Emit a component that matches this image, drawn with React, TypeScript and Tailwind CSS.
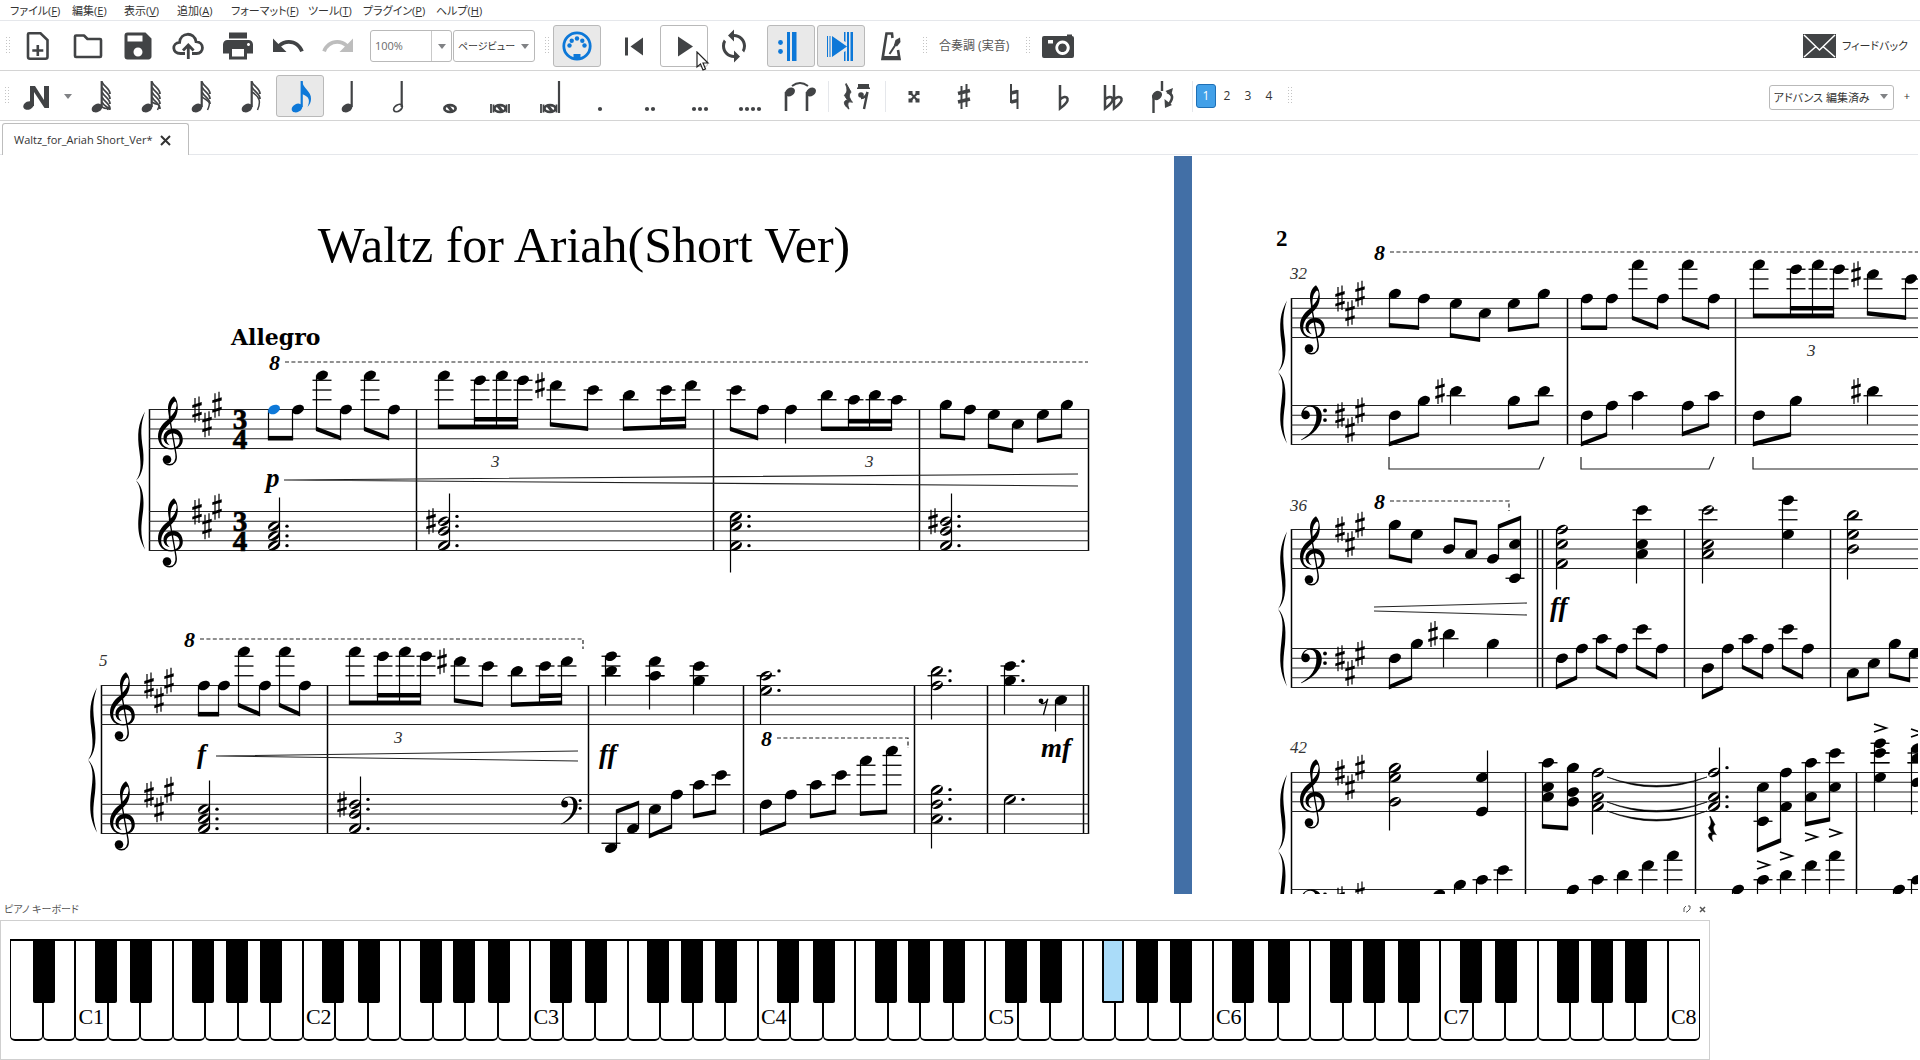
import type { ReactNode } from "react";
import { MdLoop, MdPrint, MdRedo, MdSave, MdUndo } from "react-icons/md";

/* ---------- score engraving ---------- */

const HALF_SPACE = 4.875;
const STAFF_HEIGHT = HALF_SPACE * 8;
const STEM_OFFSET = 5.5;

type Chord = {
  x: number;
  // staff steps counted downwards from the top line
  steps: number[];
  // stem end, relative to the top line
  stem?: number;
  up?: boolean;
  half?: boolean;
  dots?: number[];
  color?: string;
};

type Beam = {
  notes: [number, number | number[]][];
  ends: [number, number];
  up?: boolean;
  // index of the first note under the second beam
  second?: number;
  color?: string;
};

type StaffData = {
  top: number;
  clef: "treble" | "bass";
  time?: boolean;
  beams?: Beam[];
  chords?: Chord[];
  sharps?: [number, number][];
};

type SystemData = {
  left: number;
  right: number;
  keyX: number;
  bars: number[];
  upper: StaffData;
  lower: StaffData;
};

const b = (
  notes: Beam["notes"],
  start: number,
  end: number,
  extra: Partial<Beam> = {},
): Beam => ({ notes, ends: [start, end], ...extra });

const c = (x: number, steps: number[], stem: number, extra: Partial<Chord> = {}): Chord => ({
  x,
  steps,
  stem,
  ...extra,
});

const PAGE_ONE: SystemData[] = [
  {
    left: 149,
    right: 1089,
    keyX: 197,
    bars: [416, 713, 919, 1088],
    upper: {
      top: 409.5,
      clef: "treble",
      time: true,
      beams: [
        b([[274, 0], [298, 0]], 31, 31, { color: "#0d78d8" }),
        b([[322, -7], [346, 0]], 21.5, 31),
        b([[370, -7], [394, 0]], 21.5, 31),
        b([[444, -7], [480, -6], [502, -7], [523, -6]], 19.5, 19.5, { second: 1 }),
        b([[556, -5], [593, -4]], 17, 21.5),
        b([[629, -3], [666, -4], [691, -5]], 21.5, 19, { second: 1 }),
        b([[736, -4], [763, 0]], 21.5, 31),
        b([[827, -3], [854, -2], [875, -3], [897, -2]], 21.5, 21.5, { second: 1 }),
        b([[946, -1], [970, 0]], 28.5, 31),
        b([[994, 1], [1018, 3]], 38.5, 43.5),
        b([[1043, 1], [1067, -1]], 33.5, 28.5),
      ],
      chords: [c(791, [0], 34)],
      sharps: [[540, -5]],
    },
    lower: {
      top: 511.5,
      clef: "treble",
      time: true,
      chords: [
        c(274, [3, 5, 7], -14, { up: true, half: true, dots: [3, 5, 7] }),
        c(444, [2, 4, 7], -18, { up: true, half: true, dots: [1, 3, 7] }),
        c(736, [1, 3, 7], 61, { half: true, dots: [1, 3, 7] }),
        c(946, [2, 4, 7], -18, { up: true, half: true, dots: [1, 3, 7] }),
      ],
      sharps: [[431, 2], [933, 2]],
    },
  },
  {
    left: 101,
    right: 1089,
    keyX: 149,
    bars: [327, 588, 743, 914, 987, 1083, 1088],
    upper: {
      top: 685.5,
      clef: "treble",
      beams: [
        b([[204, 0], [224, 0]], 31, 31),
        b([[244, -7], [265, 0]], 21.5, 31),
        b([[285, -7], [305, 0]], 21.5, 31),
        b([[355, -7], [383, -6], [405, -7], [426, -6]], 19.5, 19.5, { second: 1 }),
        b([[460, -5], [488, -4]], 17, 21.5),
        b([[517, -3], [545, -4], [567, -5]], 21.5, 19.5, { second: 1 }),
      ],
      chords: [
        c(611, [-6, -3], 20),
        c(655, [-5, -2], 24),
        c(699, [-4, -1], 29),
        c(766, [-2, 1], 39, { half: true, dots: [-3, 1] }),
        c(937, [-3, 0], 34, { half: true, dots: [-3, -1] }),
        c(1010, [-4, -1], 29, { dots: [-5, -1] }),
        c(1061, [3], 46),
      ],
      sharps: [[442, -5]],
    },
    lower: {
      top: 794.5,
      clef: "treble",
      beams: [
        b([[611, 11], [633, 7]], 15, 6, { up: true }),
        b([[655, 3], [677, 0]], 44, 34),
        b([[699, -2], [721, -4]], 24, 19.5),
        b([[766, 2], [791, 0]], 41.5, 31),
        b([[816, -2], [841, -4]], 24, 19.5),
        b([[866, -7], [892, -9]], 21.5, 19.5),
      ],
      chords: [
        c(204, [3, 5, 7], -14, { up: true, half: true, dots: [3, 5, 7] }),
        c(355, [2, 4, 7], -18, { up: true, half: true, dots: [1, 3, 7] }),
        c(937, [-1, 2, 5], 54, { half: true, dots: [-1, 1, 5] }),
        c(1010, [1], 39, { half: true, dots: [1] }),
      ],
      sharps: [[342, 2]],
    },
  },
];

const PAGE_TWO: SystemData[] = [
  {
    left: 1291,
    right: 1920,
    keyX: 1340,
    bars: [1567, 1735],
    upper: {
      top: 298.5,
      clef: "treble",
      beams: [
        b([[1395, -1], [1424, 0]], 29, 31.5),
        b([[1456, 1], [1485, 3]], 39, 43.5),
        b([[1514, 1], [1544, -1]], 33.5, 29),
        b([[1587, 0], [1612, 0]], 31.5, 31.5),
        b([[1638, -7], [1663, 0]], 21.5, 31.5),
        b([[1688, -7], [1714, 0]], 21.5, 31.5),
        b([[1759, -7], [1796, -6], [1818, -7], [1839, -6]], 19.5, 19.5, { second: 1 }),
        b([[1873, -5], [1911, -4]], 17, 21.5),
      ],
      sharps: [[1856, -5]],
    },
    lower: {
      top: 405.5,
      clef: "bass",
      beams: [
        b([[1395, 2], [1424, -1]], 41, 31),
        b([[1514, -1], [1544, -3]], 24, 19),
        b([[1587, 2], [1612, 0]], 41, 31),
        b([[1688, 0], [1714, -2]], 31, 21.5),
        b([[1759, 2], [1796, -1]], 41, 31),
      ],
      chords: [c(1456, [-3], 19), c(1638, [-2], 24), c(1873, [-3], 19)],
      sharps: [[1440, -3], [1856, -3]],
    },
  },
  {
    left: 1291,
    right: 1920,
    keyX: 1340,
    bars: [1537, 1542, 1684, 1830],
    upper: {
      top: 529.5,
      clef: "treble",
      beams: [
        b([[1395, -1], [1417, 1]], 29, 34),
        b([[1449, 4], [1471, 5]], -12, -9, { up: true }),
        b([[1493, 6], [1515, [3, 10]]], -5, -14, { up: true }),
      ],
      chords: [
        c(1562, [0, 3, 7], 60, { half: true }),
        c(1642, [-4, 3, 5], 54),
        c(1708, [-4, 3, 5], 54, { half: true }),
        c(1788, [-6, 1], 39),
        c(1853, [-3, 1, 4], 50, { half: true }),
      ],
    },
    lower: {
      top: 648.5,
      clef: "bass",
      beams: [
        b([[1395, 2], [1417, -1]], 41, 31),
        b([[1562, 2], [1582, 0]], 41, 31),
        b([[1602, -2], [1622, 0]], 20.5, 31),
        b([[1642, -4], [1662, 0]], 20.5, 31),
        b([[1708, 4], [1728, 0]], 51, 41),
        b([[1748, -2], [1768, 0]], 20.5, 31),
        b([[1788, -4], [1808, 0]], 20.5, 31),
        b([[1853, 5], [1874, 3]], 53, 48),
        b([[1895, -1], [1915, 1]], 29, 34),
      ],
      chords: [c(1449, [-3], 19), c(1493, [-1], 29)],
      sharps: [[1433, -3]],
    },
  },
  {
    left: 1291,
    right: 1920,
    keyX: 1340,
    bars: [1525, 1695, 1856],
    upper: {
      top: 772.5,
      clef: "treble",
      beams: [
        b([[1548, [-2, 3, 5]], [1573, [-1, 4, 6]]], 56, 58),
        b([[1763, [3, 10]], [1786, [0, 7]]], 80, 70),
        b([[1811, [-2, 5]], [1835, [-4, 3]]], 54, 49),
      ],
      chords: [
        c(1395, [-1, 1, 6], 58, { half: true }),
        c(1482, [1, 8], -22, { up: true }),
        c(1598, [0, 5, 7], 62, { half: true }),
        c(1714, [0, 5, 7], -25, { up: true, half: true, dots: [-1, 5, 7] }),
        c(1880, [-6, -4, 1], 39),
        c(1917, [-5, -3, 2], 42),
      ],
    },
    lower: {
      top: 889.5,
      clef: "bass",
      chords: [
        c(1439, [1], 40),
        c(1460, [-1], 40),
        c(1482, [-2], 40),
        c(1503, [-4], 40),
        c(1573, [0], 40),
        c(1598, [-2], 40),
        c(1623, [-3], 40),
        c(1648, [-5], 40),
        c(1673, [-7], 40),
        c(1738, [0], 40),
        c(1763, [-2], 40),
        c(1786, [-3], 40),
        c(1811, [-5], 40),
        c(1835, [-7], 40),
        c(1899, [0], 40),
        c(1917, [-2], 40),
      ],
    },
  },
];

function Head({ x, step, half, color }: { x: number; step: number; half?: boolean; color?: string }) {
  const y = step * HALF_SPACE;
  const ledgers: number[] = [];
  for (let s = -2; s >= step; s -= 2) ledgers.push(s);
  for (let s = 10; s <= step; s += 2) ledgers.push(s);
  return (
    <g>
      {ledgers.map((s) => (
        <line key={s} x1={x - 9.5} x2={x + 9.5} y1={s * HALF_SPACE} y2={s * HALF_SPACE} stroke="#000" strokeWidth="1.3" />
      ))}
      {half ? (
        <g transform={`translate(${x} ${y}) rotate(-26)`}>
          <path
            fillRule="evenodd"
            d="M-6.3 0A6.3 4.3 0 1 1 6.3 0A6.3 4.3 0 1 1-6.3 0ZM-5.6 .7C-5 3 5.8 .6 5.6-1.2C5-3-5.8-.8-5.6 .7Z"
          />
        </g>
      ) : (
        <ellipse rx="6.3" ry="4.4" fill={color ?? "#000"} transform={`translate(${x} ${y}) rotate(-26)`} />
      )}
    </g>
  );
}

function Stem({ x, from, to }: { x: number; from: number; to: number }) {
  return <line x1={x} x2={x} y1={from} y2={to} stroke="#000" strokeWidth="1.2" />;
}

function ChordGlyph({ x, steps, stem, up, half, dots, color }: Chord) {
  const base = (up ? Math.max(...steps) : Math.min(...steps)) * HALF_SPACE;
  return (
    <g>
      {stem !== undefined && <Stem x={up ? x + STEM_OFFSET : x - STEM_OFFSET} from={base} to={stem} />}
      {steps.map((step) => (
        <Head key={step} x={x} step={step} half={half} color={color} />
      ))}
      {dots?.map((step) => (
        <circle key={step} cx={x + 13} cy={step * HALF_SPACE} r="1.7" />
      ))}
    </g>
  );
}

function BeamGroup({ notes, ends, up, second, color }: Beam) {
  const offset = up ? STEM_OFFSET : -STEM_OFFSET;
  const x1 = notes[0][0] + offset;
  const x2 = notes[notes.length - 1][0] + offset;
  const tip = (x: number) => ends[0] + ((ends[1] - ends[0]) * (x - x1)) / (x2 - x1);
  const bar = (from: number, shift: number) => {
    const t = up ? 4.6 : -4.6;
    return `M${from - 0.6} ${tip(from) + shift}L${x2 + 0.6} ${tip(x2) + shift}V${tip(x2) + shift + t}L${from - 0.6} ${tip(from) + shift + t}Z`;
  };
  return (
    <g>
      {notes.map(([x, step], i) => (
        <ChordGlyph
          key={x}
          x={x}
          steps={Array.isArray(step) ? step : [step]}
          stem={tip(x + offset) + (up ? 1 : -1)}
          up={up}
          color={i === 0 ? color : undefined}
        />
      ))}
      <path d={bar(x1, 0)} />
      {second !== undefined && <path d={bar(notes[second][0] + offset, -7.5)} />}
    </g>
  );
}

function Sharp({ x, step }: { x: number; step: number }) {
  return (
    <g transform={`translate(${x} ${step * HALF_SPACE})`}>
      <path d="M-2-11.5V13M2-13V11.5" stroke="#000" strokeWidth="1.2" />
      <path d="M-4.7-3.4L4.7-6.4V-3.2L-4.7-.6ZM-4.7 6.2L4.7 3.2V6.2L-4.7 9Z" transform="translate(0 -1)" />
    </g>
  );
}

function TrebleClef({ x }: { x: number }) {
  return (
    <g transform={`translate(${x} ${HALF_SPACE * 6})`}>
      <path
        fillRule="evenodd"
        d="M16-42.5C12-40 9.9-35 10-30C10.1-26 10.8-23 11.4-20.5C5-15.5 0-10.5 0-2C0 6 6 10.8 13.2 10.8C20 10.8 24.8 7 24.8 1C24.8-5.8 20.5-10 15.5-10C9.5-10 5.5-6 5.5-1C5.5 2.8 8 5.8 11.8 6.4C9.4 4.6 8.6 2.6 8.6 .8C8.6-2.8 11-5.2 14.8-5.2C18.8-5.2 21.6-2.6 21.6 1.8C21.6 6 18.5 9.4 13 9.4C7.5 9.4 3.2 6 3.2 .2C3.2-6 6.8-10.4 13-16C17.2-20 19.8-24.5 19.8-31C19.8-36 18.5-40 16-42.5ZM17-37.2C18.2-37 18.7-35.2 18.5-33C18-29 16-25.5 12.7-22.3C11.9-28.5 13.4-35 17-37.2Z"
      />
      <path d="M11.4-22L18 15.5C19.2 22.5 15.5 26 11.6 26C9 26 7 25 6 23" fill="none" stroke="#000" strokeWidth="1.4" />
      <circle cx="9" cy="20.8" r="4.3" />
    </g>
  );
}

function BassClef({ x, small }: { x: number; small?: boolean }) {
  return (
    <g transform={small ? `translate(${x} 2) scale(.8)` : `translate(${x} 0)`}>
      <path d="M0 34.2C9.5 29 15.4 21 15.4 11C15.4 4.6 13.2 1.3 9.2 1.3C5.8 1.3 3.2 3.3 2.6 6.4L.4 9.2C.4 3.8 4.6 0 10.3 0C16.6 0 20.8 4 20.8 10.6C20.8 20.5 12.8 29.5 .3 34.8Z" />
      <circle cx="4.6" cy="9.4" r="4.3" />
      <circle cx="24" cy="5" r="1.9" />
      <circle cx="24" cy="14.6" r="1.9" />
    </g>
  );
}

function Brace({ x, top, bottom }: { x: number; top: number; bottom: number }) {
  const h = (bottom - top) / 2;
  const half = `M9 ${-h}C2 ${-h * 0.82} 1 ${-h * 0.68} 3.4 ${-h * 0.42}C5.4 ${-h * 0.2} 5 ${-h * 0.1} 0 0C6.5 ${-h * 0.08} 8.6 ${-h * 0.24} 7 ${-h * 0.45}C4.6 ${-h * 0.7} 4.4 ${-h * 0.8} 9 ${-h}Z`;
  return (
    <g transform={`translate(${x} ${top + h})`}>
      <path d={half} />
      <path d={half} transform="scale(1 -1)" />
    </g>
  );
}

function TimeSignature({ x }: { x: number }) {
  return (
    <text className="text-[29px] font-bold" textAnchor="middle" stroke="#000" strokeWidth=".7">
      <tspan x={x} y={19}>3</tspan>
      <tspan x={x} y={39}>4</tspan>
    </text>
  );
}

function Staff({ staff, system }: { staff: StaffData; system: SystemData }) {
  const { left, right, keyX } = system;
  const shift = staff.clef === "bass" ? 2 : 0;
  return (
    <g transform={`translate(0 ${staff.top})`}>
      {[0, 2, 4, 6, 8].map((s) => (
        <line key={s} x1={left} x2={right} y1={s * HALF_SPACE} y2={s * HALF_SPACE} stroke="#222" strokeWidth="1.1" />
      ))}
      {staff.clef === "treble" ? <TrebleClef x={left + 9} /> : <BassClef x={left + 10} />}
      <Sharp x={keyX} step={shift} />
      <Sharp x={keyX + 10} step={3 + shift} />
      <Sharp x={keyX + 20} step={-1 + shift} />
      {staff.time && <TimeSignature x={240} />}
      {staff.sharps?.map(([x, step]) => <Sharp key={x} x={x} step={step} />)}
      {staff.chords?.map((chord) => <ChordGlyph key={chord.x} {...chord} />)}
      {staff.beams?.map((beam) => <BeamGroup key={beam.notes[0][0]} {...beam} />)}
    </g>
  );
}

function System({ system }: { system: SystemData }) {
  const top = system.upper.top;
  const bottom = system.lower.top + STAFF_HEIGHT;
  return (
    <g>
      <Brace x={system.left - 13} top={top + 2} bottom={bottom - 1} />
      {[system.left, ...system.bars].map((x) => (
        <line key={x} x1={x + 0.5} x2={x + 0.5} y1={top - 0.5} y2={bottom + 0.5} stroke="#000" strokeWidth="1.5" />
      ))}
      <Staff staff={system.upper} system={system} />
      <Staff staff={system.lower} system={system} />
    </g>
  );
}

function Ottava({ x, y, to, hook }: { x: number; y: number; to: number; hook?: boolean }) {
  return (
    <g>
      <text x={x} y={y + 8} className="text-[22px] font-bold italic">8</text>
      <path
        d={`M${x + 16} ${y}H${to}${hook ? "v10" : ""}`}
        fill="none"
        stroke="#222"
        strokeWidth="1.2"
        strokeDasharray="4 2.4"
      />
    </g>
  );
}

function Hairpin({ x1, x2, y, from, to }: { x1: number; x2: number; y: number; from: number; to: number }) {
  return (
    <path d={`M${x1} ${y - from}L${x2} ${y - to}M${x1} ${y + from}L${x2} ${y + to}`} stroke="#222" strokeWidth="1.1" />
  );
}

function Dynamic({ x, y, children }: { x: number; y: number; children: ReactNode }) {
  return (
    <text x={x} y={y} className="text-[27px] font-bold italic">
      {children}
    </text>
  );
}

function Small({ x, y, children }: { x: number; y: number; children: ReactNode }) {
  return (
    <text x={x} y={y} className="text-[17px] italic" fill="#333">
      {children}
    </text>
  );
}

const QUARTER_REST = "M2.2 0L7 8.6C4.6 11.4 4.6 13.6 8.4 18.8C4.4 17.4 2.4 19.4 5 25.6C-.8 21.6-1 16.6 3.6 16.8L.4 11.8C3.6 8.6 3.6 5.6 1.6 .8Z";

function PageOne() {
  return (
    <svg
      className="shrink-0 bg-white font-['Liberation_Serif',serif]"
      width="1174"
      height="738"
      viewBox="0 156 1174 738"
      role="img"
      aria-label="Waltz for Ariah(Short Ver), page 1"
    >
      <text x="584" y="262" textAnchor="middle" className="text-[50px]">Waltz for Ariah(Short Ver)</text>
      <text x="231" y="345" className="font-['DejaVu_Serif',serif] text-[22px] font-bold">Allegro</text>
      {PAGE_ONE.map((system) => <System key={system.upper.top} system={system} />)}

      <Ottava x={269} y={362} to={1088} />
      <Small x={491} y={467}>3</Small>
      <Small x={865} y={467}>3</Small>
      <Dynamic x={266} y={487}>p</Dynamic>
      <Hairpin x1={284} x2={1078} y={480} from={0} to={6} />

      <Small x={99} y={666}>5</Small>
      <Ottava x={184} y={639} to={583} hook />
      <Small x={394} y={743}>3</Small>
      <Dynamic x={197} y={763}>f</Dynamic>
      <Hairpin x1={216} x2={578} y={756} from={0} to={5} />
      <Dynamic x={599} y={763}>ff</Dynamic>
      <Ottava x={761} y={738} to={908} hook />
      <Dynamic x={1041} y={757}>mf</Dynamic>
      <g transform="translate(0 794.5)">
        <BassClef x={561} small />
      </g>
      <g transform="translate(1038 698)">
        <circle cx="3" cy="3" r="2.4" />
        <path d="M3 5.4C6 6 8.6 4 9.8 .8L5.4 17" fill="none" stroke="#000" strokeWidth="1.3" />
      </g>
    </svg>
  );
}

function PageTwo() {
  return (
    <svg
      className="block bg-white font-['Liberation_Serif',serif]"
      width="728"
      height="738"
      viewBox="1192 156 728 738"
      role="img"
      aria-label="Waltz for Ariah(Short Ver), page 2"
    >
      <text x="1276" y="246" className="text-[23px] font-bold">2</text>
      {PAGE_TWO.map((system) => <System key={system.upper.top} system={system} />)}

      <Small x={1290} y={279}>32</Small>
      <Ottava x={1374} y={252} to={1920} />
      <Small x={1807} y={356}>3</Small>
      <path
        d="M1389 457V469H1539L1544 457M1581 457V469H1709L1714 457M1753 457V469H1920"
        fill="none"
        stroke="#222"
        strokeWidth="1.2"
      />

      <Small x={1290} y={511}>36</Small>
      <Ottava x={1374} y={501} to={1509} hook />
      <Hairpin x1={1374} x2={1527} y={609} from={2} to={6} />
      <Dynamic x={1550} y={616}>ff</Dynamic>

      <Small x={1290} y={753}>42</Small>
      {[777, 802, 811].map((y) => (
        <path key={y} d={`M1607 ${y}Q1656 ${y + 20} 1707 ${y}Q1656 ${y + 17} 1607 ${y}Z`} stroke="#000" strokeWidth=".6" />
      ))}
      <path d={QUARTER_REST} transform="translate(1708 816)" stroke="#000" strokeWidth=".5" />
      {[
        [1763, 865],
        [1786, 856],
        [1811, 837],
        [1835, 833],
        [1880, 728],
        [1917, 733],
      ].map(([x, y]) => (
        <path key={x} d={`M${x - 6} ${y - 4}L${x + 6} ${y}L${x - 6} ${y + 4}`} fill="none" stroke="#000" strokeWidth="1.8" />
      ))}
    </svg>
  );
}

/* ---------- toolbar icons ---------- */

function Icon({ children }: { children: ReactNode }) {
  return (
    <svg className="size-9" viewBox="0 0 36 36" fill="none" stroke="none" aria-hidden="true">
      {children}
    </svg>
  );
}

const NewIcon = () => (
  <Icon>
    <path d="M9 5.2H20.5L27.5 12V28.8Q27.5 30.8 25.5 30.8H10Q8 30.8 8 28.8V6.2Q8 5.2 9 5.2Z" stroke="currentColor" strokeWidth="2.6" />
    <path d="M17.8 17V28M12.3 22.5H23.3" stroke="currentColor" strokeWidth="2.6" />
  </Icon>
);

const OpenIcon = () => (
  <Icon>
    <path d="M5 8.5Q5 7.5 6 7.5H14L17.5 11H30Q31 11 31 12V28Q31 29 30 29H6Q5 29 5 28Z" stroke="currentColor" strokeWidth="2.6" strokeLinejoin="round" />
  </Icon>
);

const CloudIcon = () => (
  <Icon>
    <path
      d="M15 25.5H10.5C1.8 25.5 1.6 15 9.6 14.4C10.4 4 24.2 3.4 26 13.6C34.6 14 34.4 25.5 26.5 25.5H22"
      stroke="currentColor"
      strokeWidth="2.8"
    />
    <path d="M18.3 31V18M13 22.5L18.3 17L23.6 22.5" stroke="currentColor" strokeWidth="2.8" />
  </Icon>
);

const MidiIcon = () => (
  <Icon>
    <circle cx="18" cy="18" r="13.2" stroke="currentColor" strokeWidth="2.8" />
    <path d="M14.5 26H21.5V32H14.5Z" fill="currentColor" />
    {[
      [10.5, 17.5],
      [12.7, 12.8],
      [18, 10.5],
      [23.3, 12.8],
      [25.5, 17.5],
    ].map(([x, y]) => (
      <circle key={x} cx={x} cy={y} r="2.2" fill="currentColor" />
    ))}
  </Icon>
);

const RewindIcon = () => (
  <Icon>
    <path d="M9 9.5H12V27.5H9ZM27 9.5V27.5L14.5 18.5Z" fill="currentColor" />
  </Icon>
);

const PlayIcon = () => (
  <Icon>
    <path d="M12 8.5V28.5L27 18.5Z" fill="currentColor" />
  </Icon>
);

const RepeatIcon = () => (
  <Icon>
    <circle cx="7.5" cy="14.5" r="2.4" fill="currentColor" />
    <circle cx="7.5" cy="23.5" r="2.4" fill="currentColor" />
    <path d="M14 4H17V33H14ZM19 4H23.5V33H19Z" fill="currentColor" />
  </Icon>
);

const PanIcon = () => (
  <Icon>
    <path d="M4 8H5V29H4ZM6.5 8H7.5V29H6.5ZM9 8L24 18.5L9 29ZM21 4H22.500V14L21 13ZM24 4H26V33H24ZM27.5 4H30V33H27.5ZM21 24L22.5 23V33H21Z" fill="currentColor" />
  </Icon>
);

const MetronomeIcon = () => (
  <Icon>
    <path d="M19.5 10L19 5.5H13.5L9.5 31H26.5L25 22" stroke="currentColor" strokeWidth="2.6" />
    <path d="M11 28H25V32H9Z" fill="currentColor" />
    <path d="M16.5 26L26 11.5" stroke="currentColor" strokeWidth="2" />
    <path d="M21 17L22.5 12L27 9.5L27.5 14L24 18.5Z" fill="currentColor" />
  </Icon>
);

const CameraIcon = () => (
  <Icon>
    <path
      fillRule="evenodd"
      fill="currentColor"
      d="M4 8H27V6.5H32V8Q34 8 34 10V28Q34 30 32 30H4Q2 30 2 28V10Q2 8 4 8ZM8 12V15.5H13V12ZM22.5 12.5A7.2 7.2 0 1 0 22.6 12.5ZM22.5 15.5A4.3 4.3 0 1 1 22.4 15.5Z"
    />
  </Icon>
);

const NIcon = () => (
  <Icon>
    <ellipse cx="10.5" cy="27.5" rx="5.5" ry="4" transform="rotate(-25 10.5 27.5)" fill="currentColor" />
    <path d="M12 28V8H17L26 22V8H31V30H26.5L16 14V28Z" fill="currentColor" />
  </Icon>
);

function NoteIcon({ flags = 0, hollow }: { flags?: number; hollow?: boolean }) {
  return (
    <Icon>
      {hollow ? (
        <ellipse cx="16" cy="30" rx="4.8" ry="3" transform="rotate(-35 16 30)" stroke="currentColor" strokeWidth="1.8" />
      ) : (
        <ellipse cx="15" cy="30" rx="5.6" ry="4" transform="rotate(-28 15 30)" fill="currentColor" />
      )}
      <path d="M19.7 3V29" stroke="currentColor" strokeWidth="2.2" />
      {flags === 1 && (
        <path d="M20 3C21 11 29.500 13 29 21C29 24 27.5 27 25.5 29C30 19 23 17.5 20 16Z" fill="currentColor" />
      )}
      {flags > 1 &&
        Array.from({ length: flags }, (_, i) => (
          <path key={i} d={`M20 ${4 + i * 5}C22 ${9 + i * 5} 28 ${10 + i * 5} 28 ${Math.min(16 + i * 5, 32)}`} stroke="currentColor" strokeWidth="1.8" />
        ))}
      {flags > 1 && <path d={`M20 ${4 + flags * 5}C28 ${9 + flags * 5} 29 24 25.5 32`} stroke="currentColor" strokeWidth="1.5" />}
    </Icon>
  );
}

function WholeIcon({ breve, longa }: { breve?: boolean; longa?: boolean }) {
  return (
    <Icon>
      <ellipse cx="18" cy="30.5" rx="5.6" ry="3.4" stroke="currentColor" strokeWidth="2.8" />
      <path d="M15.5 27.5L20.5 33.5" stroke="currentColor" strokeWidth="3" />
      {(breve || longa) && <path d="M9 26V35M11.5 26.5V34.500M27 26V35M24.5 26.5V34.5" stroke="currentColor" strokeWidth="1.8" />}
      {longa && <path d="M27 3V35" stroke="currentColor" strokeWidth="2.2" />}
    </Icon>
  );
}

const DotsIcon = ({ count }: { count: number }) => (
  <Icon>
    {Array.from({ length: count }, (_, i) => (
      <circle key={i} cx={18 + (i - (count - 1) / 2) * 6} cy="31" r="2.1" fill="currentColor" />
    ))}
  </Icon>
);

const TieIcon = () => (
  <Icon>
    <ellipse cx="8" cy="14" rx="5.4" ry="4" transform="rotate(-35 8 14)" fill="currentColor" />
    <ellipse cx="29" cy="14" rx="5.4" ry="4" transform="rotate(-35 29 14)" fill="currentColor" />
    <path d="M4 14V33M25 14V33" stroke="currentColor" strokeWidth="2.6" />
    <path d="M10 8Q18 2 26 8" stroke="currentColor" strokeWidth="2" />
  </Icon>
);

const RestIcon = () => (
  <Icon>
    <path d={QUARTER_REST} transform="translate(5 5.5)" fill="currentColor" stroke="currentColor" />
    <path d="M19 6H30V10H19ZM18 9.5H31V11H18Z" fill="currentColor" />
    <circle cx="22" cy="17" r="2.8" fill="currentColor" />
    <path d="M22 20Q27 20 28.5 14L25 31" stroke="currentColor" strokeWidth="2.4" />
  </Icon>
);

const DoubleSharpIcon = () => (
  <Icon>
    <path d="M14 14.5L22 23M22 14.5L14 23" stroke="currentColor" strokeWidth="2" />
    <path d="M12.5 13H16.5V17H12.5ZM19.5 13H23.5V17H19.5ZM12.5 20.5H16.5V24.5H12.5ZM19.5 20.5H23.5V24.5H19.5Z" fill="currentColor" />
  </Icon>
);

const SharpIcon = () => (
  <Icon>
    <path d="M15.5 8V31M20.5 6V29" stroke="currentColor" strokeWidth="2" />
    <path d="M12 15.5L24 12.5M12 24L24 21" stroke="currentColor" strokeWidth="3.4" />
  </Icon>
);

const NaturalIcon = () => (
  <Icon>
    <path d="M15 6V25M21.5 12V31" stroke="currentColor" strokeWidth="2" />
    <path d="M15 15L21.5 13.5M15 24L21.5 22.5" stroke="currentColor" strokeWidth="3.4" />
  </Icon>
);

const FlatIcon = ({ double }: { double?: boolean }) => (
  <Icon>
    {(double ? [-5, 4] : [0]).map((dx) => (
      <path
        key={dx}
        d="M14 7V30.5C19 27 22.5 24 21.5 20.5C20.5 18 16.5 18.5 14 21.5"
        transform={`translate(${dx} 0)`}
        stroke="currentColor"
        strokeWidth="2.5"
      />
    ))}
  </Icon>
);

const FlipIcon = () => (
  <Icon>
    <ellipse cx="11" cy="17.5" rx="5.4" ry="4.2" transform="rotate(-35 11 17.5)" fill="currentColor" />
    <path d="M7.5 17V35M16 3V13" stroke="currentColor" strokeWidth="2.4" />
    <path d="M21 14Q30 17 23 26" stroke="currentColor" strokeWidth="2.6" />
    <path d="M19.5 13L27 10L25 18ZM18.5 21L26 27L19 30Z" fill="currentColor" />
  </Icon>
);

/* ---------- chrome ---------- */

function ToolButton({ label, active, children }: { label: string; active?: boolean; children: ReactNode }) {
  return (
    <button
      type="button"
      aria-label={label}
      aria-pressed={active}
      className={
        active
          ? "flex h-[42px] w-12 shrink-0 items-center justify-center rounded-[3px] border border-[#b9b9b9] bg-[#e9e9e9] text-[#0d78d8]"
          : "flex h-[42px] w-12 shrink-0 items-center justify-center rounded-[3px] text-[#414345]"
      }
    >
      {children}
    </button>
  );
}

function Handle() {
  return (
    <svg className="h-[18px] w-1 shrink-0" viewBox="0 0 4 18" aria-hidden="true">
      <path d="M.5 0V18M3.5 0V18" stroke="#c4c4c4" strokeDasharray="1 2" />
    </svg>
  );
}

const Divider = () => <div className="h-[31px] w-px shrink-0 bg-gray-200" />;

const Arrow = () => (
  <svg className="h-[5px] w-2" viewBox="0 0 8 5" aria-hidden="true">
    <path d="M0 0H8L4 5Z" fill="#808285" />
  </svg>
);

const MENUS = [
  ["ファイル", "F", "w-[62px]"],
  ["編集", "E", "w-[52px]"],
  ["表示", "V", "w-[53px]"],
  ["追加", "A", "w-[54px]"],
  ["フォーマット", "F", "w-[77px]"],
  ["ツール", "T", "w-[55px]"],
  ["プラグイン", "P", "w-[73px]"],
  ["ヘルプ", "H", "w-[60px]"],
];

function MenuBar() {
  return (
    <nav className="flex h-[21px] items-center border-b border-gray-200 pl-2.5 text-[11px] leading-none">
      {MENUS.map(([label, key, width]) => (
        <button key={label} type="button" className={`shrink-0 text-left whitespace-nowrap ${width}`}>
          {label}(<span className="underline">{key}</span>)
        </button>
      ))}
    </nav>
  );
}

function MainToolbar() {
  return (
    <div className="flex h-[50px] items-center border-b border-[#d4d4d4] pt-px">
      <div className="flex items-center pl-1.5">
        <Handle />
        <div className="ml-1 flex gap-0.5">
          <ToolButton label="新規"><NewIcon /></ToolButton>
          <ToolButton label="開く"><OpenIcon /></ToolButton>
          <ToolButton label="保存"><MdSave className="size-9" /></ToolButton>
          <ToolButton label="オンラインに保存"><CloudIcon /></ToolButton>
          <ToolButton label="印刷"><MdPrint className="size-9" /></ToolButton>
          <ToolButton label="元に戻す"><MdUndo className="size-9" /></ToolButton>
          <ToolButton label="やり直し"><MdRedo className="size-9 text-[#bdbdbd]" /></ToolButton>
        </div>
      </div>

      <div className="ml-2 flex h-8 w-[82px] shrink-0 rounded-[3px] border border-[#b9b9b9] text-[#6b6b6b]">
        <input aria-label="ズーム" defaultValue="100%" className="w-[60px] min-w-0 pl-1 text-[11px] outline-none" />
        <button type="button" aria-label="ズームの一覧" className="flex flex-1 items-center justify-center border-l border-[#c9c9c9]">
          <Arrow />
        </button>
      </div>
      <div className="relative ml-px h-8 w-[82px] shrink-0">
        <select aria-label="表示モード" className="h-full w-full appearance-none rounded-[3px] border border-[#b9b9b9] pl-1 text-[10px] outline-none">
          <option>ページビュー</option>
        </select>
        <span className="pointer-events-none absolute inset-y-0 right-1.5 flex items-center"><Arrow /></span>
      </div>

      <div className="flex items-center pl-2.5">
        <Handle />
        <div className="ml-1 flex gap-0.5">
          <ToolButton label="MIDI入力" active><MidiIcon /></ToolButton>
          <div className="ml-[7px] flex gap-0.5">
            <ToolButton label="先頭に戻る"><RewindIcon /></ToolButton>
            <div className="relative">
              <div className="rounded-[3px] border border-[#b9b9b9] [&>button]:-m-px">
                <ToolButton label="再生"><PlayIcon /></ToolButton>
              </div>
              <svg className="pointer-events-none absolute top-[26px] left-[36px] z-10 h-[21px] w-[14px]" viewBox="0 0 14 21" aria-hidden="true">
                <path d="M1 1V16L4.5 13L7 19L9.5 18L7 12H12Z" fill="#fff" stroke="#222" strokeWidth="1.2" />
              </svg>
            </div>
            <ToolButton label="ループ再生"><MdLoop className="size-9" /></ToolButton>
          </div>
          <div className="ml-[7px] flex gap-0.5">
            <ToolButton label="リピート再生" active><RepeatIcon /></ToolButton>
            <ToolButton label="自動スクロール" active><PanIcon /></ToolButton>
            <ToolButton label="メトロノーム"><MetronomeIcon /></ToolButton>
          </div>
        </div>
      </div>

      <div className="flex items-center pl-2">
        <Handle />
        <button type="button" className="ml-3 w-[71px] text-left text-xs whitespace-nowrap text-[#555]">合奏調 (実音)</button>
        <div className="ml-4"><Handle /></div>
        <div className="ml-1"><ToolButton label="画像キャプチャー"><CameraIcon /></ToolButton></div>
      </div>

      <a href="#feedback" className="mr-3 ml-auto flex items-center gap-1.5 text-[11px] whitespace-nowrap">
        <svg className="h-6 w-[33px]" viewBox="0 0 33 24" aria-hidden="true">
          <path d="M0 0H33V24H0Z" fill="#414345" />
          <path d="M1 1L16.5 16L32 1M1 23L13 12.5M32 23L20 12.5" fill="none" stroke="#fff" strokeWidth="1.5" />
        </svg>
        フィードバック
      </a>
    </div>
  );
}

function NoteToolbar() {
  return (
    <div className="flex h-[50px] items-center border-b border-[#d4d4d4] pt-px">
      <div className="flex items-center pl-[5px]">
        <Handle />
        <div className="ml-[3px]"><ToolButton label="音符入力"><NIcon /></ToolButton></div>
        <button type="button" aria-label="音符入力モード" className="flex w-4 justify-center"><Arrow /></button>
      </div>
      <div className="flex gap-0.5">
        <ToolButton label="128分音符"><NoteIcon flags={5} /></ToolButton>
        <ToolButton label="64分音符"><NoteIcon flags={4} /></ToolButton>
        <ToolButton label="32分音符"><NoteIcon flags={3} /></ToolButton>
        <ToolButton label="16分音符"><NoteIcon flags={2} /></ToolButton>
        <ToolButton label="8分音符" active><NoteIcon flags={1} /></ToolButton>
        <ToolButton label="4分音符"><NoteIcon /></ToolButton>
        <ToolButton label="2分音符"><NoteIcon hollow /></ToolButton>
        <ToolButton label="全音符"><WholeIcon /></ToolButton>
        <ToolButton label="倍全音符"><WholeIcon breve /></ToolButton>
        <ToolButton label="4倍全音符"><WholeIcon longa /></ToolButton>
        <ToolButton label="付点"><DotsIcon count={1} /></ToolButton>
        <ToolButton label="複付点"><DotsIcon count={2} /></ToolButton>
        <ToolButton label="三重付点"><DotsIcon count={3} /></ToolButton>
        <ToolButton label="四重付点"><DotsIcon count={4} /></ToolButton>
        <ToolButton label="タイ"><TieIcon /></ToolButton>
      </div>
      <div className="ml-1 flex items-center gap-1">
        <Divider />
        <ToolButton label="休符"><RestIcon /></ToolButton>
        <Divider />
      </div>
      <div className="ml-1 flex gap-0.5">
        <ToolButton label="ダブルシャープ"><DoubleSharpIcon /></ToolButton>
        <ToolButton label="シャープ"><SharpIcon /></ToolButton>
        <ToolButton label="ナチュラル"><NaturalIcon /></ToolButton>
        <ToolButton label="フラット"><FlatIcon /></ToolButton>
        <ToolButton label="ダブルフラット"><FlatIcon double /></ToolButton>
        <ToolButton label="反転"><FlipIcon /></ToolButton>
      </div>
      <div className="ml-1 flex items-center gap-px text-xs">
        <Divider />
        <button type="button" aria-pressed="true" className="ml-0.5 h-6 w-5 rounded-[3px] border border-[#1e6fb5] bg-[#42a0e8] text-white">1</button>
        <button type="button" className="h-6 w-5">2</button>
        <button type="button" className="h-6 w-5">3</button>
        <button type="button" className="h-6 w-5">4</button>
        <div className="ml-2"><Handle /></div>
      </div>

      <div className="mr-2.5 ml-auto flex items-center gap-2.5">
        <div className="relative h-[25px] w-[125px]">
          <select aria-label="ワークスペース" className="h-full w-full appearance-none rounded-[3px] border border-[#b9b9b9] pl-1 text-[11px] outline-none">
            <option>アドバンス 編集済み</option>
          </select>
          <span className="pointer-events-none absolute inset-y-0 right-1.5 flex items-center"><Arrow /></span>
        </div>
        <button type="button" aria-label="ワークスペースを追加" className="text-[11px]">+</button>
      </div>
    </div>
  );
}

function TabBar() {
  return (
    <div className="mr-0.5 flex h-[34px] items-end border-b border-gray-200">
      <div className="-mb-px ml-0.5 flex h-8 w-[187px] items-center rounded-t-[3px] border border-b-0 border-[#bdbdbd] bg-white pt-0.5 pl-[11px] text-[11px]">
        <span className="w-[140px] whitespace-nowrap">Waltz_for_Ariah Short_Ver*</span>
        <button type="button" aria-label="タブを閉じる" className="ml-1.5">
          <svg className="size-[11px]" viewBox="0 0 11 11" aria-hidden="true">
            <path d="M1 1L10 10M10 1L1 10" stroke="#333" strokeWidth="2" />
          </svg>
        </button>
      </div>
    </div>
  );
}

/* ---------- piano ---------- */

const WHITE_KEYS = Array.from({ length: 52 }, (_, i) => ({
  name: "ABCDEFG"[i % 7],
  octave: Math.floor((i + 5) / 7),
}));

// black key position against the white key's right edge
const BLACK_OFFSET: Record<string, string> = {
  A: "-right-[13px]",
  C: "-right-2.5",
  D: "-right-[13px]",
  F: "-right-2.5",
  G: "-right-[11px]",
};

const PRESSED = "F5";

function PianoPanel() {
  return (
    <section className="w-[1710px] max-w-full">
      <header className="flex h-[26px] items-center justify-between pt-1 pr-1 pl-1 text-[10px] text-[#555]">
        <h2>ピアノ キーボード</h2>
        <div className="flex items-center gap-2">
          <button type="button" aria-label="フロート">
            <svg className="size-2" viewBox="0 0 8 8" fill="none" stroke="#555" aria-hidden="true">
              <path d="M1 7V3L3 1M5 1H7V4L4 7H3" />
            </svg>
          </button>
          <button type="button" aria-label="閉じる">
            <svg className="size-[7px]" viewBox="0 0 7 7" stroke="#555" strokeWidth="1.5" aria-hidden="true">
              <path d="M1 1L6 6M6 1L1 6" />
            </svg>
          </button>
        </div>
      </header>
      <div className="border border-[#cfcfcf] px-[9px] pt-[18px] pb-[18px]">
        <div className="flex h-[102px] border-t-2 border-black">
          {WHITE_KEYS.map(({ name, octave }, i) => (
            <div
              key={i}
              className="relative flex flex-1 items-end justify-center rounded-b-[5px] border border-t-0 border-b-2 border-black pb-1.5 font-['Liberation_Serif',serif] text-[22px] text-black"
            >
              {name === "C" && `C${octave}`}
              {BLACK_OFFSET[name] && i < 51 && (
                <div
                  className={`absolute top-0 z-10 h-[62px] w-[22px] rounded-b-[2px] ${BLACK_OFFSET[name]} ${
                    name + octave === PRESSED ? "border-2 border-t-0 border-black bg-[#aadcf9]" : "bg-black"
                  }`}
                />
              )}
            </div>
          ))}
        </div>
      </div>
    </section>
  );
}

export default function App() {
  return (
    <div className="flex min-h-screen flex-col overflow-hidden bg-white font-['Open_Sans','Noto_Sans_CJK_JP',sans-serif] text-[#333] [font-feature-settings:'palt']">
      <MenuBar />
      <MainToolbar />
      <NoteToolbar />
      <TabBar />
      <main className="mt-px mr-0.5 flex gap-[18px] overflow-hidden bg-[#426fa6]">
        <PageOne />
        <div className="min-w-0 flex-1 overflow-hidden bg-white">
          <PageTwo />
        </div>
      </main>
      <PianoPanel />
    </div>
  );
}
